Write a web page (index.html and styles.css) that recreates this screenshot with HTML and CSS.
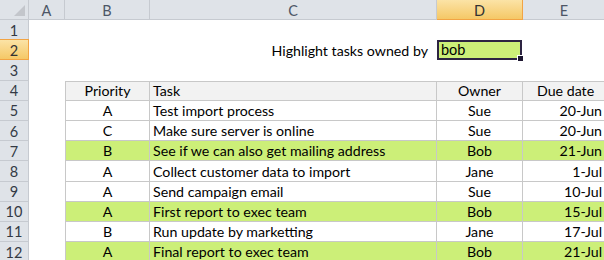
FILE: index.html
```html
<!DOCTYPE html>
<html>
<head>
<meta charset="utf-8">
<link rel="stylesheet" href="styles.css">
</head>
<body>
<div class="sheet">
  <div class="corner"><span class="tri"></span></div>
  <div class="ch">A</div>
  <div class="ch">B</div>
  <div class="ch">C</div>
  <div class="ch sel">D</div>
  <div class="ch">E</div>

  <div class="rh">1</div>
  <div class="c"></div><div class="c"></div><div class="c"></div><div class="c"></div><div class="c"></div>

  <div class="rh sel">2</div>
  <div class="c"></div><div class="c"></div>
  <div class="c right label">Highlight tasks owned by</div>
  <div class="c input">bob<span class="handle"></span></div>
  <div class="c"></div>

  <div class="rh">3</div>
  <div class="c"></div><div class="c"></div><div class="c"></div><div class="c"></div><div class="c"></div>

  <div class="rh">4</div>
  <div class="c"></div>
  <div class="c t th tl center">Priority</div>
  <div class="c t th">Task</div>
  <div class="c t th center">Owner</div>
  <div class="c t th hdate">Due date</div>

  <div class="rh">5</div>
  <div class="c"></div>
  <div class="c t tl center">A</div><div class="c t">Test import process</div><div class="c t center">Sue</div><div class="c t right">20-Jun</div>

  <div class="rh">6</div>
  <div class="c"></div>
  <div class="c t tl center">C</div><div class="c t">Make sure server is online</div><div class="c t center">Sue</div><div class="c t right">20-Jun</div>

  <div class="rh">7</div>
  <div class="c"></div>
  <div class="c t tl g center">B</div><div class="c t g">See if we can also get mailing address</div><div class="c t g center">Bob</div><div class="c t g right">21-Jun</div>

  <div class="rh">8</div>
  <div class="c"></div>
  <div class="c t tl center">A</div><div class="c t">Collect customer data to import</div><div class="c t center">Jane</div><div class="c t right">1-Jul</div>

  <div class="rh">9</div>
  <div class="c"></div>
  <div class="c t tl center">A</div><div class="c t">Send campaign email</div><div class="c t center">Sue</div><div class="c t right">10-Jul</div>

  <div class="rh">10</div>
  <div class="c"></div>
  <div class="c t tl g center">A</div><div class="c t g">First report to exec team</div><div class="c t g center">Bob</div><div class="c t g right">15-Jul</div>

  <div class="rh">11</div>
  <div class="c"></div>
  <div class="c t tl center">B</div><div class="c t">Run update by marketting</div><div class="c t center">Jane</div><div class="c t right">17-Jul</div>

  <div class="rh">12</div>
  <div class="c"></div>
  <div class="c t tl g center">A</div><div class="c t g">Final report to exec team</div><div class="c t g center">Bob</div><div class="c t g right">21-Jul</div>
</div>
</body>
</html>
```

FILE: styles.css
```css
html, body {
  margin: 0;
  padding: 0;
  background: #ffffff;
  overflow: hidden;
}

.sheet {
  display: grid;
  grid-template-columns: 29px 36px 85px 287px 86px 83px;
  grid-template-rows: 20px repeat(12, 20.2px);
  width: 606px;
  font-family: Lato, "Open Sans", sans-serif;
  font-size: 14.2px;
  color: #000;
}

.corner {
  position: relative;
  background: #dfe3e8;
  border-right: 1px solid #c6cad0;
  border-bottom: 1px solid #c6cad0;
  box-sizing: border-box;
}

.tri {
  position: absolute;
  right: 3px;
  bottom: 3px;
  width: 0;
  height: 0;
  border-left: 11px solid transparent;
  border-bottom: 11px solid #c3c6cb;
}

.ch {
  background: #dfe3e8;
  border-right: 1px solid #c6cad0;
  border-bottom: 1px solid #c6cad0;
  box-sizing: border-box;
  display: flex;
  align-items: center;
  justify-content: center;
  padding-top: 1px;
  color: #4d5666;
  font-size: 14.5px;
}

.rh {
  background: #dfe3e8;
  border-right: 1px solid #c6cad0;
  border-bottom: 1px solid #c6cad0;
  box-sizing: border-box;
  display: flex;
  align-items: center;
  justify-content: center;
  padding-top: 1px;
  color: #333a44;
  font-size: 14.5px;
}

.ch.sel, .rh.sel {
  background: linear-gradient(#fbe3a6, #f5c866);
  border-color: #f2a444;
  color: #333;
}

.rh.sel {
  border-top: 1px solid #f2a444;
  margin-top: -1px;
}

.c {
  box-sizing: border-box;
  display: flex;
  align-items: flex-end;
  padding: 0 3px 0 3px;
  white-space: nowrap;
  overflow: hidden;
  line-height: 18px;
}

.center { justify-content: center; }
.right { justify-content: flex-end; }

.label { padding-right: 9px; }

.input {
  position: relative;
  background: #ccef78;
  border: 2px solid #2d2442;
  padding-left: 2px;
  padding-bottom: 0;
  line-height: 16px;
  font-size: 14.5px;
  overflow: visible;
  width: 85px;
}

.handle {
  position: absolute;
  right: -4px;
  bottom: -4px;
  width: 5px;
  height: 5px;
  background: #1d1630;
  border: 1px solid #fff;
}

.t {
  border-right: 1px solid #c8c8c8;
  border-bottom: 1px solid #c8c8c8;
}

.tl { border-left: 1px solid #c8c8c8; }

.th {
  background: #f2f2f2;
  border-top: 1px solid #c8c8c8;
}

.hdate { padding-left: 14px; }

.g { background: #ccef78; }
```
